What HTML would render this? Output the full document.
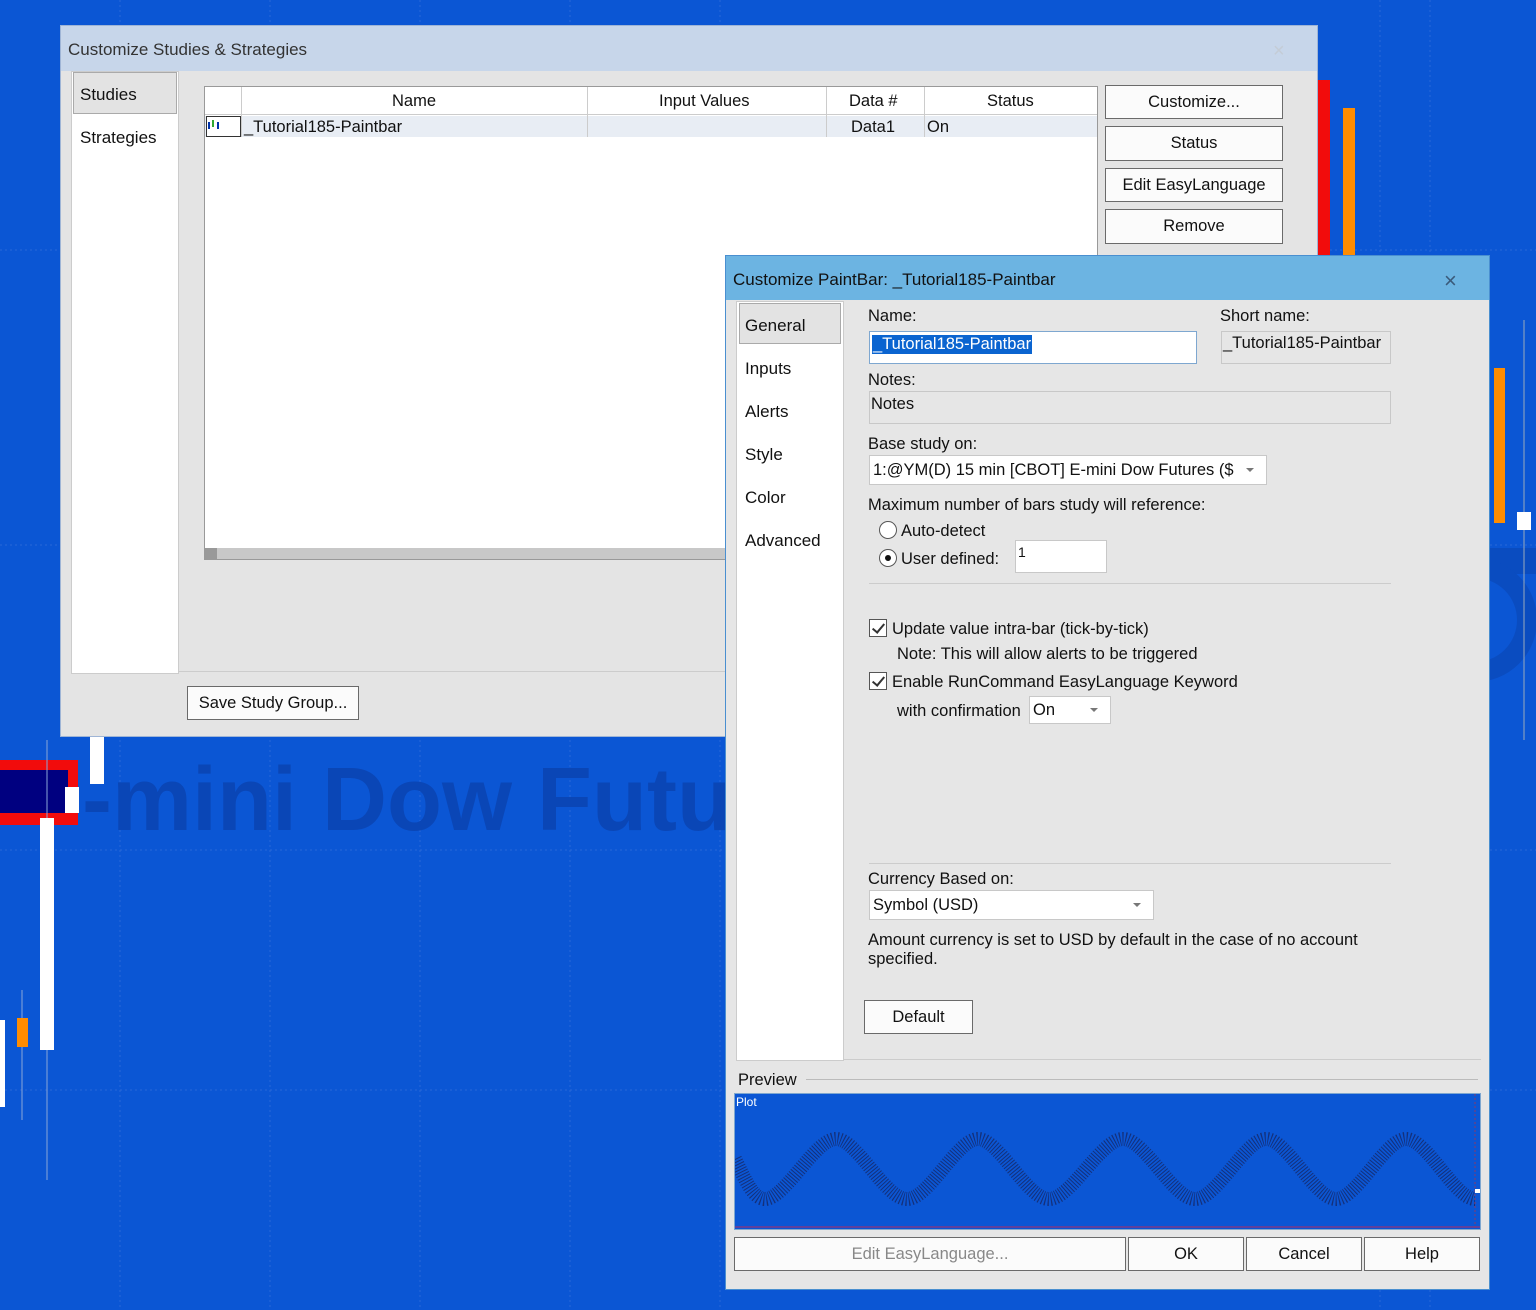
<!DOCTYPE html>
<html><head><meta charset="utf-8"><style>
*{box-sizing:border-box;margin:0;padding:0}
body{width:1536px;height:1310px;position:relative;overflow:hidden;background:#0b56d4;font-family:"Liberation Sans",sans-serif;font-size:16.5px;color:#111}
.a{position:absolute}
.t{position:absolute;white-space:nowrap;line-height:1}
.btn{position:absolute;background:#fbfbfb;border:1px solid #6a6a6a;text-align:center;font-size:16.5px;display:flex;align-items:center;justify-content:center}
.inp{position:absolute;background:#fff;border:1px solid #c8c8c8}
.dd:after{content:"";position:absolute;right:12px;top:50%;margin-top:-2px;border-left:4px solid transparent;border-right:4px solid transparent;border-top:4px solid #777}
.cb{position:absolute;width:18px;height:18px;border:1px solid #555;background:#fff}
.cb:after{content:"";position:absolute;left:5px;top:1px;width:5px;height:10px;border-right:2px solid #333;border-bottom:2px solid #333;transform:rotate(40deg)}
.rd{position:absolute;width:18px;height:18px;border:1px solid #555;border-radius:50%;background:#fff}
</style></head><body>
<svg class="a" style="left:0;top:0" width="1536" height="1310">
<g stroke="#2a68d8" stroke-width="1" stroke-dasharray="2 3">
<line x1="0" y1="250" x2="1536" y2="250"/><line x1="0" y1="850" x2="1536" y2="850"/><line x1="0" y1="1090" x2="1536" y2="1090"/><line x1="0" y1="545" x2="1536" y2="545"/>
<line x1="120" y1="0" x2="120" y2="1310"/><line x1="270" y1="0" x2="270" y2="1310"/><line x1="420" y1="0" x2="420" y2="1310"/><line x1="570" y1="0" x2="570" y2="1310"/><line x1="720" y1="0" x2="720" y2="1310"/><line x1="1380" y1="0" x2="1380" y2="1310"/><line x1="1430" y1="0" x2="1430" y2="1310"/>
</g>
<text x="82" y="830" font-family="Liberation Sans" font-weight="bold" font-size="90" fill="#0a46b6" textLength="650" lengthAdjust="spacingAndGlyphs">-mini Dow Futu</text>
<rect x="1490" y="548" width="46" height="26" fill="#0a4cc0"/>
<circle cx="1475" cy="620" r="52" fill="none" stroke="#0a4cc0" stroke-width="20"/>
<rect x="1318" y="80" width="12" height="175" fill="#f20c0c"/>
<rect x="1343" y="108" width="12" height="147" fill="#ff8c00"/>
<rect x="1494" y="368" width="11" height="155" fill="#ff8c00"/>
<line x1="1524" y1="320" x2="1524" y2="740" stroke="#9ab" stroke-width="1"/>
<rect x="1517" y="512" width="14" height="18" fill="#fff"/>
<rect x="0" y="760" width="78" height="65" fill="#f20c0c"/>
<rect x="0" y="770" width="68" height="43" fill="#000080"/>
<rect x="65" y="787" width="14" height="26" fill="#fff"/>
<rect x="90" y="737" width="14" height="47" fill="#fff"/>
<line x1="47" y1="740" x2="47" y2="1180" stroke="#8aa6d8"/>
<rect x="40" y="818" width="14" height="232" fill="#fff"/>
<line x1="22" y1="990" x2="22" y2="1120" stroke="#8aa6d8"/>
<rect x="17" y="1018" width="11" height="29" fill="#ff8c00"/>
<rect x="0" y="1020" width="5" height="87" fill="#fff"/>
</svg>

<div class="a" style="left:60px;top:25px;width:1258px;height:712px;background:#e4e4e4;border:1px solid #9fb5d6">
 <div class="a" style="left:0;top:0;width:1256px;height:45px;background:#c7d6ea"></div>
 <div class="t" style="left:7px;top:15px;font-size:17px;color:#333">Customize Studies &amp; Strategies</div>
 <div class="t" style="left:1212px;top:15px;font-size:20px;color:#c4ccd6">×</div>
 <div class="a" style="left:10px;top:45px;width:108px;height:603px;background:#fff;border:1px solid #ccc"></div>
 <div class="a" style="left:12px;top:46px;width:104px;height:42px;background:#e3e3e3;border:1px solid #aaa"></div>
 <div class="t" style="left:19px;top:60px;font-size:17px">Studies</div>
 <div class="t" style="left:19px;top:103px;font-size:17px">Strategies</div>
 <div class="a" style="left:143px;top:60px;width:894px;height:474px;background:#fff;border:1px solid #999"></div>
 <div class="a" style="left:144px;top:61px;width:892px;height:28px;background:#fff;border-bottom:1px solid #ccc"></div>
 <div class="a" style="left:144px;top:90px;width:892px;height:21px;background:#e8edf4"></div>
 <div class="a" style="left:180px;top:61px;width:1px;height:50px;background:#ccc"></div>
 <div class="a" style="left:526px;top:61px;width:1px;height:50px;background:#ccc"></div>
 <div class="a" style="left:765px;top:61px;width:1px;height:50px;background:#ccc"></div>
 <div class="a" style="left:863px;top:61px;width:1px;height:50px;background:#ccc"></div>
 <div class="a" style="left:145px;top:90px;width:35px;height:21px;border:1px solid #333;background:#fff"></div>
 <div class="a" style="left:147px;top:96px;width:2px;height:7px;background:#0033aa"></div>
 <div class="a" style="left:151px;top:94px;width:2px;height:7px;background:#3a3"></div>
 <div class="a" style="left:156px;top:96px;width:2px;height:7px;background:#0033aa"></div>
 <div class="t" style="left:331px;top:67px">Name</div>
 <div class="t" style="left:598px;top:67px">Input Values</div>
 <div class="t" style="left:788px;top:67px">Data #</div>
 <div class="t" style="left:926px;top:67px">Status</div>
 <div class="t" style="left:183px;top:93px">_Tutorial185-Paintbar</div>
 <div class="t" style="left:790px;top:93px">Data1</div>
 <div class="t" style="left:866px;top:93px">On</div>
 <div class="a" style="left:144px;top:522px;width:892px;height:11px;background:#c8c8c8"></div>
 <div class="a" style="left:144px;top:522px;width:12px;height:11px;background:#999"></div>
 <div class="btn" style="left:1044px;top:59px;width:178px;height:34px">Customize...</div>
 <div class="btn" style="left:1044px;top:100px;width:178px;height:35px">Status</div>
 <div class="btn" style="left:1044px;top:142px;width:178px;height:34px">Edit EasyLanguage</div>
 <div class="btn" style="left:1044px;top:183px;width:178px;height:35px">Remove</div>
 <div class="a" style="left:118px;top:645px;width:1140px;height:1px;background:#ccc"></div>
 <div class="btn" style="left:126px;top:660px;width:172px;height:34px">Save Study Group...</div>
</div>

<div class="a" style="left:725px;top:255px;width:765px;height:1035px;background:#e6e6e6;border:1px solid #4a8fd0">
 <div class="a" style="left:0;top:0;width:763px;height:44px;background:#6cb4e2"></div>
 <div class="t" style="left:7px;top:15px;font-size:17px">Customize PaintBar: _Tutorial185-Paintbar</div>
 <div class="t" style="left:718px;top:14px;font-size:22px;color:#3a5a7a">×</div>
 <div class="a" style="left:10px;top:45px;width:108px;height:760px;background:#fff;border:1px solid #ccc"></div>
 <div class="a" style="left:13px;top:47px;width:102px;height:41px;background:#e3e3e3;border:1px solid #aaa"></div>
 <div class="t" style="left:19px;top:61px;font-size:17px">General</div>
 <div class="t" style="left:19px;top:104px;font-size:17px">Inputs</div>
 <div class="t" style="left:19px;top:147px;font-size:17px">Alerts</div>
 <div class="t" style="left:19px;top:190px;font-size:17px">Style</div>
 <div class="t" style="left:19px;top:233px;font-size:17px">Color</div>
 <div class="t" style="left:19px;top:276px;font-size:17px">Advanced</div>

 <div class="t" style="left:142px;top:52px">Name:</div>
 <div class="inp" style="left:143px;top:75px;width:328px;height:33px;border-color:#7ea7d0"></div>
 <div class="t" style="left:146px;top:79px;background:#0a64d0;color:#fff;padding:1px 1px">_Tutorial185-Paintbar</div>
 <div class="t" style="left:494px;top:52px">Short name:</div>
 <div class="inp" style="left:495px;top:75px;width:170px;height:33px;background:#e6e6e6"></div>
 <div class="t" style="left:497px;top:79px">_Tutorial185-Paintbar</div>
 <div class="t" style="left:142px;top:116px">Notes:</div>
 <div class="inp" style="left:143px;top:135px;width:522px;height:33px;background:#e6e6e6"></div>
 <div class="t" style="left:145px;top:140px">Notes</div>
 <div class="t" style="left:142px;top:180px">Base study on:</div>
 <div class="inp dd" style="left:143px;top:199px;width:398px;height:30px"></div>
 <div class="t" style="left:147px;top:206px">1:@YM(D) 15 min [CBOT] E-mini Dow Futures ($</div>
 <div class="t" style="left:142px;top:241px">Maximum number of bars study will reference:</div>
 <div class="rd" style="left:153px;top:265px"></div>
 <div class="t" style="left:175px;top:267px">Auto-detect</div>
 <div class="rd" style="left:153px;top:293px"></div>
 <div class="a" style="left:159px;top:299px;width:6px;height:6px;border-radius:50%;background:#111"></div>
 <div class="t" style="left:175px;top:295px">User defined:</div>
 <div class="inp" style="left:289px;top:284px;width:92px;height:33px"></div>
 <div class="t" style="left:292px;top:289px;font-size:14px">1</div>
 <div class="a" style="left:143px;top:327px;width:522px;height:1px;background:#ccc"></div>
 <div class="cb" style="left:143px;top:363px"></div>
 <div class="t" style="left:166px;top:365px">Update value intra-bar (tick-by-tick)</div>
 <div class="t" style="left:171px;top:390px">Note: This will allow alerts to be triggered</div>
 <div class="cb" style="left:143px;top:416px"></div>
 <div class="t" style="left:166px;top:418px">Enable RunCommand EasyLanguage Keyword</div>
 <div class="t" style="left:171px;top:447px">with confirmation</div>
 <div class="inp dd" style="left:303px;top:440px;width:82px;height:28px"></div>
 <div class="t" style="left:307px;top:446px">On</div>
 <div class="a" style="left:143px;top:607px;width:522px;height:1px;background:#ccc"></div>
 <div class="t" style="left:142px;top:615px">Currency Based on:</div>
 <div class="inp dd" style="left:143px;top:634px;width:285px;height:30px"></div>
 <div class="t" style="left:147px;top:641px">Symbol (USD)</div>
 <div class="t" style="left:142px;top:676px">Amount currency is set to USD by default in the case of no account</div>
 <div class="t" style="left:142px;top:695px">specified.</div>
 <div class="btn" style="left:138px;top:744px;width:109px;height:34px">Default</div>
 <div class="a" style="left:118px;top:803px;width:637px;height:1px;background:#ccc"></div>
 <div class="t" style="left:12px;top:816px">Preview</div>
 <div class="a" style="left:80px;top:823px;width:672px;height:1px;background:#bbb"></div>
 <div class="a" style="left:8px;top:837px;width:747px;height:137px;background:#0b56d4;border:1px solid #7ea7d0;overflow:hidden">
  <div class="t" style="left:1px;top:2px;font-size:12px;color:#fff">Plot</div>
  <svg class="a" style="left:0;top:0" width="747" height="137">
   <path d="M0,65 C10,85 18,105 30,105 C50,105 80,45 101,45 C122,45 150,105 172,105 C194,105 222,45 243,45 C264,45 292,105 314,105 C336,105 366,45 388,45 C410,45 438,105 460,105 C482,105 510,45 531,45 C552,45 580,105 601,105 C622,105 650,45 671,45 C692,45 720,105 740,105" fill="none" stroke="#14307a" stroke-width="14" stroke-dasharray="1 1.8"/>
   <line x1="0" y1="133" x2="747" y2="133" stroke="#7a3a8a" stroke-width="1.5"/>
   <line x1="740" y1="0" x2="740" y2="137" stroke="#8a3a6a" stroke-width="1" stroke-dasharray="2 2"/>
   <rect x="740" y="95" width="5" height="4" fill="#fff"/>
  </svg>
 </div>
 <div class="btn" style="left:8px;top:981px;width:392px;height:34px;color:#888">Edit EasyLanguage...</div>
 <div class="btn" style="left:402px;top:981px;width:116px;height:34px">OK</div>
 <div class="btn" style="left:520px;top:981px;width:116px;height:34px">Cancel</div>
 <div class="btn" style="left:638px;top:981px;width:116px;height:34px">Help</div>
</div>
</body></html>
